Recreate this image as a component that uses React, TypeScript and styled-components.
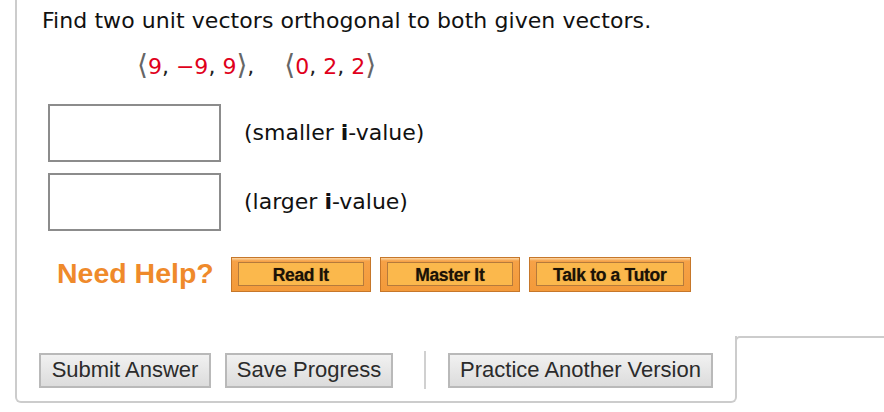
import React from "react";
import styled, { createGlobalStyle } from "styled-components";

const GlobalStyle = createGlobalStyle`
  html, body {
    margin: 0;
    padding: 0;
    background: #ffffff;
  }
  body {
    font-family: "DejaVu Sans", Verdana, sans-serif;
    color: #111;
  }
`;

const Panel = styled.div`
  margin-left: 15px;
  width: 869px;
`;

const Content = styled.div`
  border-left: 2px solid #cccccc;
  padding: 8px 0 44px 25px;
  display: flex;
  flex-direction: column;
`;

const Question = styled.div`
  font-size: 22px;
  line-height: 26px;
  letter-spacing: 0.07px;
`;

const Vectors = styled.div`
  margin: 20px 0 0 95px;
  font-size: 22px;
  line-height: 26px;
  height: 26px;
  color: #222;
  display: flex;
  align-items: baseline;
`;

const VectorGroup = styled.span<{ $gap?: number }>`
  margin-left: ${(p) => p.$gap ?? 0}px;
  white-space: pre;
`;

const Bracket = styled.span`
  color: #666;
  font-size: 28px;
  line-height: 0;
`;

const Num = styled.span`
  color: #e0001b;
`;

const AnswerRow = styled.div<{ $first?: boolean }>`
  display: flex;
  align-items: center;
  gap: 23px;
  margin: ${(p) => (p.$first ? "24px" : "11px")} 0 0 6px;
`;

const AnswerBox = styled.input`
  box-sizing: border-box;
  width: 173px;
  height: 58px;
  border: 2px solid #8c8c8c;
  border-radius: 0;
  background: #fff;
  margin: 0;
  padding: 0 6px;
  font-size: 20px;
  outline: none;
`;

const Label = styled.span`
  font-size: 22px;
  line-height: 26px;
`;

const HelpRow = styled.div`
  display: flex;
  align-items: center;
  margin: 26px 0 0 15px;
`;

const NeedHelp = styled.span`
  font-family: "Liberation Sans", Arial, sans-serif;
  font-weight: bold;
  font-size: 28.5px;
  color: #ef8a2b;
  margin-right: 17px;
  margin-top: -2px;
`;

const HelpButton = styled.button<{ $w: number }>`
  box-sizing: border-box;
  width: ${(p) => p.$w}px;
  height: 35px;
  margin-right: 9px;
  padding: 4px 6px 5px;
  border: 1px solid #c6772a;
  background: linear-gradient(#fbd6a6 0, #f6a247 3px, #f39a3a 100%);
  cursor: pointer;
  display: flex;
`;

const HelpInner = styled.span`
  flex: 1;
  display: flex;
  align-items: center;
  justify-content: center;
  padding-top: 3px;
  border: 1px solid #b57a3c;
  background: #fbb84c;
  font-family: "Liberation Sans", Arial, sans-serif;
  font-weight: bold;
  font-size: 17.5px;
  letter-spacing: -0.3px;
  color: #1a1208;
  text-shadow: 0 0 1px rgba(60, 40, 0, 0.6);
`;

const BarRow = styled.div`
  display: flex;
  align-items: flex-start;
`;

const ButtonBar = styled.div`
  display: flex;
  align-items: center;
  padding: 15px 22px 12px 22px;
  border: 2px solid #cccccc;
  border-top: none;
  border-radius: 0 0 6px 6px;
`;

const BarTail = styled.div`
  flex: 1;
  height: 12px;
  margin-left: -2px;
  border-top: 2px solid #cccccc;
  border-left: 2px solid #cccccc;
  border-top-left-radius: 5px;
`;

const GrayButton = styled.button<{ $w: number; $gap?: number }>`
  box-sizing: border-box;
  width: ${(p) => p.$w}px;
  height: 35px;
  margin-right: ${(p) => p.$gap ?? 0}px;
  padding: 0;
  border: 2px solid #b9b9b9;
  border-radius: 0;
  background: linear-gradient(#f1f1f1, #dcdcdc);
  font-family: "Liberation Sans", Arial, sans-serif;
  font-size: 22px;
  color: #2b2b2b;
  cursor: pointer;
`;

const Separator = styled.div`
  width: 2px;
  height: 38px;
  background: #d0d0d0;
  margin: 0 22px 0 31px;
`;

const App = () => {
  return (
    <>
      <GlobalStyle />
      <Panel>
        <Content>
          <Question>Find two unit vectors orthogonal to both given vectors.</Question>
          <Vectors>
            <VectorGroup>
              <Bracket>⟨</Bracket>
              <Num>9</Num>, <Num>−9</Num>, <Num>9</Num>
              <Bracket>⟩</Bracket>,
            </VectorGroup>
            <VectorGroup $gap={30}>
              <Bracket>⟨</Bracket>
              <Num>0</Num>, <Num>2</Num>, <Num>2</Num>
              <Bracket>⟩</Bracket>
            </VectorGroup>
          </Vectors>
          <AnswerRow $first>
            <AnswerBox type="text" />
            <Label>
              (smaller <b>i</b>-value)
            </Label>
          </AnswerRow>
          <AnswerRow>
            <AnswerBox type="text" />
            <Label>
              (larger <b>i</b>-value)
            </Label>
          </AnswerRow>
          <HelpRow>
            <NeedHelp>Need Help?</NeedHelp>
            <HelpButton $w={140}>
              <HelpInner>Read It</HelpInner>
            </HelpButton>
            <HelpButton $w={140}>
              <HelpInner>Master It</HelpInner>
            </HelpButton>
            <HelpButton $w={162}>
              <HelpInner>Talk to a Tutor</HelpInner>
            </HelpButton>
          </HelpRow>
        </Content>
        <BarRow>
          <ButtonBar>
            <GrayButton $w={172} $gap={14}>Submit Answer</GrayButton>
            <GrayButton $w={168}>Save Progress</GrayButton>
            <Separator />
            <GrayButton $w={265}>Practice Another Version</GrayButton>
          </ButtonBar>
          <BarTail />
        </BarRow>
      </Panel>
    </>
  );
};

export default App;
